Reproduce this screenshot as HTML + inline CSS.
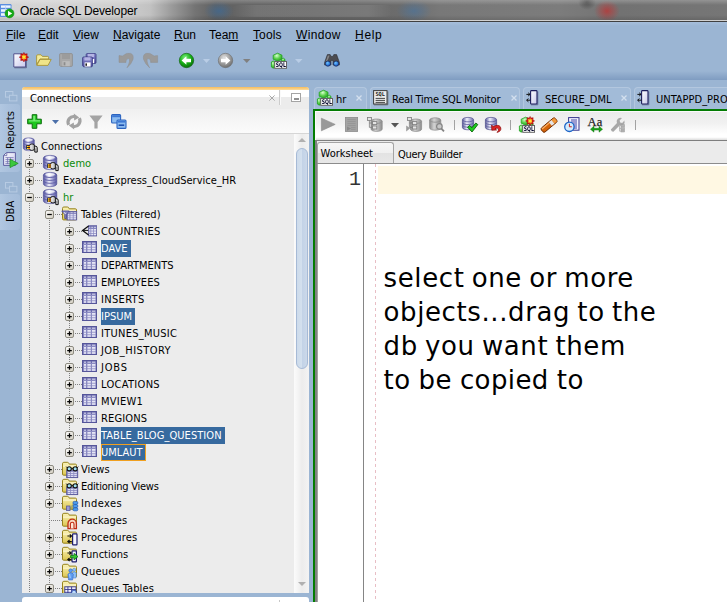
<!DOCTYPE html>
<html><head><meta charset="utf-8"><title>Oracle SQL Developer</title>
<style>
html,body{margin:0;padding:0;}
body{width:727px;height:602px;overflow:hidden;position:relative;background:#9bb5d3;font-family:"DejaVu Sans Condensed","DejaVu Sans","Liberation Sans",sans-serif;font-size:11px;color:#000;}
.a{position:absolute;}
.t{position:absolute;white-space:pre;line-height:1;}
#title{left:0;top:0;width:727px;height:20px;background:linear-gradient(90deg,#d6d6d6 0,#d0d0d0 120px,#c2c2c2 150px,#9a9a9a 172px,#747474 195px,#626262 215px,#666 300px,#6c6c6c 400px,#787878 440px,#7c7c7c 560px,#727272 620px,#767676 727px);}
#title .hl{left:0;top:0;width:727px;height:20px;background:linear-gradient(180deg,rgba(255,255,255,.22) 0,rgba(255,255,255,0) 5px,rgba(0,0,0,0) 15px,rgba(0,0,0,.12) 20px);}
.menu{font-family:"Liberation Sans",sans-serif;font-size:12px;top:29px;}
.menu u{text-decoration:underline;text-underline-offset:1px;}
.tree{font-size:11px;}
.sel{background:#376a9f;color:#fff;}
.big{font-family:"DejaVu Sans","Liberation Sans",sans-serif;font-size:26px;left:383.6px;color:#000;letter-spacing:0.6px;word-spacing:-1.6px;}

.hd{height:1px;background-image:linear-gradient(90deg,#808080 1px,transparent 1px);background-size:2px 1px;}
.vd{width:1px;background-image:linear-gradient(180deg,#808080 1px,transparent 1px);background-size:1px 2px;}
</style></head>
<body>
<div id="title" class="a"><div class="a" style="left:232px;top:5px;width:160px;height:12px;border-radius:6px;background:linear-gradient(90deg,rgba(255,255,255,0),rgba(255,255,255,.1) 15%,rgba(255,255,255,.1) 85%,rgba(255,255,255,0));"></div><div class="a" style="left:204px;top:1px;width:30px;height:20px;background:radial-gradient(ellipse at center,rgba(60,105,150,.7),rgba(60,105,150,0) 70%);"></div><div class="a" style="left:396px;top:0px;width:36px;height:22px;background:radial-gradient(ellipse at center,rgba(70,115,160,.6),rgba(70,115,160,0) 70%);"></div><div class="a" style="left:578px;top:-6px;width:18px;height:16px;background:radial-gradient(ellipse at center,rgba(40,40,40,.5),rgba(40,40,40,0) 70%);"></div><div class="a" style="left:594px;top:0px;width:26px;height:22px;background:radial-gradient(ellipse at center,rgba(190,50,50,.75),rgba(190,50,50,0) 70%);"></div><div class="a hl"></div></div>
<div class="a" style="left:0;top:20px;width:727px;height:1px;background:#d0d0d0"></div>
<div class="a" style="left:0;top:21px;width:727px;height:1px;background:#404040"></div>
<div class="t" style="left:20px;top:5px;font-family:'Liberation Sans',sans-serif;font-size:12px;letter-spacing:-0.15px;">Oracle SQL Developer</div>
<svg class="a" style="left:0;top:3px;overflow:visible" width="15" height="16" viewBox="0 0 15 16"><rect x="-0.5" y="1" width="12" height="13" rx="1.2" fill="#5a8ee0"/><g fill="#eef4ff"><rect x="1" y="2.4" width="9.6" height="2.4"/><rect x="1" y="6.2" width="9.6" height="2.6"/><rect x="1" y="10.2" width="9.6" height="2.6"/></g><path d="M5.6 2.4 L5.6 13" stroke="#b8d0f8" stroke-width="0.8"/><circle cx="9.5" cy="10.4" r="4.5" fill="#14a814" stroke="#0c8c0c" stroke-width="0.5"/><path d="M8 7.8 L12.2 10.4 L8 13 Z" fill="#fff"/></svg>
<div class="t menu" style="left:6px;letter-spacing:0px"><u>F</u>ile</div>
<div class="t menu" style="left:38px;letter-spacing:0px"><u>E</u>dit</div>
<div class="t menu" style="left:73px;letter-spacing:0px"><u>V</u>iew</div>
<div class="t menu" style="left:113px;letter-spacing:0px"><u>N</u>avigate</div>
<div class="t menu" style="left:174px;letter-spacing:0px"><u>R</u>un</div>
<div class="t menu" style="left:209px;letter-spacing:0px">Tea<u>m</u></div>
<div class="t menu" style="left:253px;letter-spacing:0.1px"><u>T</u>ools</div>
<div class="t menu" style="left:296px;letter-spacing:0.35px"><u>W</u>indow</div>
<div class="t menu" style="left:355px;letter-spacing:0.7px"><u>H</u>elp</div>
<div class="a" style="left:0;top:22px;width:727px;height:4px;background:linear-gradient(180deg,#a6bedb,#9bb5d3)"></div>
<div class="a" style="left:0;top:71px;width:727px;height:9px;background:linear-gradient(180deg,#9bb5d3,#7f9cc1)"></div>
<div class="a" style="left:0;top:104px;width:20px;height:68px;background:linear-gradient(90deg,#b1c7e1 0,#aac1dd 8px,#a5bdda 20px);border-radius:0 3px 3px 0"></div>
<div class="a" style="left:0;top:194px;width:20px;height:36px;background:linear-gradient(90deg,#b1c7e1 0,#aac1dd 8px,#a5bdda 20px);border-radius:0 3px 3px 0"></div>
<div class="t" style="left:5px;top:149px;transform-origin:0 0;transform:rotate(-90deg);font-size:11px;">Reports</div>
<div class="t" style="left:5px;top:222px;transform-origin:0 0;transform:rotate(-90deg);font-size:11px;">DBA</div>
<svg class="a" style="left:3px;top:152px;overflow:visible" width="16" height="16" viewBox="0 0 16 16"><path d="M0.6 3.4 L3.6 0.6 L12.4 0.6 L12.4 13.4 L0.6 13.4 Z" fill="url(#gdoc)" stroke="#55559a" stroke-width="0.9"/><path d="M0.8 3.6 L3.8 3.6 L3.8 0.8" fill="none" stroke="#55559a" stroke-width="0.7"/><g stroke="#6c6cae" stroke-width="0.7" fill="none"><path d="M2.4 5.6 L10.6 5.6 M2.4 7.6 L10.6 7.6 M2.4 9.6 L8 9.6 M2.4 11.6 L7 11.6 M4.6 5.6 L4.6 12 M7.4 5.6 L7.4 9"/></g><path d="M7 7.2 L15.2 11.4 L7 15.6 Z" fill="#3cc83c" stroke="#1c8c1c" stroke-width="0.7" stroke-linejoin="round"/></svg>
<div class="a" style="left:22px;top:87px;width:287px;height:506px;background:#ececec;border-radius:3px 3px 0 0;overflow:hidden"><div class="a" style="left:0;top:0;width:287px;height:3px;background:linear-gradient(180deg,#f7bd5c,#fbdca0)"></div><div class="a" style="left:0;top:3px;width:287px;height:7px;background:#fff"></div><div class="a" style="left:0;top:10px;width:287px;height:12px;background:#ececec"></div><div class="a" style="left:0;top:22px;width:287px;height:24px;background:linear-gradient(180deg,#f0f0f0,#fbfbfb)"></div><div class="a" style="left:0;top:46px;width:287px;height:1px;background:#d6d6d6"></div><div class="a" style="left:272px;top:47px;width:15px;height:459px;background:linear-gradient(90deg,#fbfbfb 0,#f6f6f6 3px,#ececec 8px,#f3f3f3 15px)"></div></div>
<div class="t" style="left:30px;top:93px;font-size:11px;">Connections</div>
<svg class="a" style="left:269px;top:95px" width="6" height="6" viewBox="0 0 6 6"><path d="M0.4 0.4 L5.6 5.6 M5.6 0.4 L0.4 5.6" stroke="#a8a8a8" stroke-width="1"/></svg>
<div class="a" style="left:279px;top:90px;width:1px;height:15px;background:#cccccc"></div><div class="a" style="left:280px;top:90px;width:1px;height:15px;background:#fafafa"></div>
<div class="a" style="left:291px;top:93px;width:8px;height:7px;border:1px solid #a4a4a4;background:#fff"></div><div class="a" style="left:293.5px;top:98px;width:5px;height:1.6px;background:#909090"></div>
<svg class="a" style="left:5px;top:91px" width="13" height="11" viewBox="0 0 13 11"><rect x="0.5" y="0.5" width="7.4" height="5.6" fill="none" stroke="#b7cbe3" stroke-width="1"/><rect x="4.5" y="4.3" width="7.4" height="5.6" fill="#9bb5d3" stroke="#b7cbe3" stroke-width="1"/></svg>
<svg class="a" style="left:5px;top:182px" width="13" height="11" viewBox="0 0 13 11"><rect x="0.5" y="0.5" width="7.4" height="5.6" fill="none" stroke="#b7cbe3" stroke-width="1"/><rect x="4.5" y="4.3" width="7.4" height="5.6" fill="#9bb5d3" stroke="#b7cbe3" stroke-width="1"/></svg>
<div class="a" style="left:22px;top:597px;width:287px;height:10px;background:#fff;border-radius:3px 3px 0 0"></div>
<svg class="a" style="left:298px;top:138px" width="8" height="4" viewBox="0 0 10 5"><path d="M0 5 L5 0 L10 5 Z" fill="#b0b0b0"/></svg>
<svg class="a" style="left:298px;top:582px" width="8" height="4" viewBox="0 0 10 5"><path d="M0 0 L5 5 L10 0 Z" fill="#b0b0b0"/></svg>
<div class="a" style="left:279px;top:600px;width:1px;height:2px;background:#c8c8c8"></div>
<div class="a" style="left:296px;top:148px;width:10px;height:219px;border:1px solid #a6bad6;border-radius:6px;background:linear-gradient(90deg,#cddbeb,#d3e0ee 45%,#c3d3e7 55%,#cbd9ea)"></div>
<svg width="0" height="0" style="position:absolute"><defs>
<linearGradient id="gcyl" x1="0" x2="1" y1="0" y2="0"><stop offset="0" stop-color="#4f4f9a"/><stop offset="0.18" stop-color="#8f8fc8"/><stop offset="0.42" stop-color="#f0f0fa"/><stop offset="0.7" stop-color="#9c9cd0"/><stop offset="1" stop-color="#55559e"/></linearGradient>
<linearGradient id="gfold" x1="0" x2="0" y1="0" y2="1"><stop offset="0" stop-color="#faf3b8"/><stop offset="1" stop-color="#dcc650"/></linearGradient>
<linearGradient id="gplug" x1="0" x2="1" y1="0" y2="0"><stop offset="0" stop-color="#ffffff"/><stop offset="1" stop-color="#a8a8a8"/></linearGradient>
<linearGradient id="gexp" x1="0" x2="1" y1="0" y2="1"><stop offset="0" stop-color="#ffffff"/><stop offset="1" stop-color="#cfcabc"/></linearGradient>
<g id="cyl"><path d="M0.4 3.2 C0.4 -0.6 13.8 -0.6 13.8 3.2 L13.8 11.8 C13.8 15.6 0.4 15.6 0.4 11.8 Z" fill="url(#gcyl)" stroke="#4a4a94" stroke-width="0.6"/>
<path d="M0.6 3.4 C1.5 6.2 12.7 6.2 13.6 3.4" fill="none" stroke="#5a5aa4" stroke-width="0.9"/>
<path d="M0.6 6.3 C1.5 9.1 12.7 9.1 13.6 6.3" fill="none" stroke="#5a5aa4" stroke-width="0.9"/>
<path d="M0.6 9.2 C1.5 12 12.7 12 13.6 9.2" fill="none" stroke="#5a5aa4" stroke-width="0.9"/>
<ellipse cx="7.1" cy="2.6" rx="4.8" ry="1.3" fill="#fff" opacity="0.75"/></g>
<g id="plug"><path d="M11.5 9.2 L14 9.8 Q15.2 10 15.2 11.2 L15.2 15.6 L12.8 15.6 L12.8 12 L11.5 12 Z" fill="#d8d8d8" stroke="#111" stroke-width="1"/>
<rect x="4.3" y="8.6" width="4" height="4.4" fill="#111"/>
<rect x="7.6" y="7.6" width="4.8" height="6.2" rx="1.6" fill="url(#gplug)" stroke="#111" stroke-width="0.9"/>
<rect x="5" y="9.4" width="3" height="1.1" fill="#ff8c00"/><rect x="5" y="9.4" width="1.2" height="1.1" fill="#ffe840"/>
<rect x="5" y="11.4" width="3" height="1.1" fill="#ff8c00"/><rect x="5" y="11.4" width="1.2" height="1.1" fill="#ffe840"/></g>
<g id="tbl"><rect x="0.5" y="1.5" width="14" height="11" fill="#8a8ac2" stroke="#55559a" stroke-width="1"/>
<rect x="1" y="2" width="13" height="2" fill="#6c6cae"/>
<g fill="#e6e6f6"><rect x="2" y="2.6" width="2" height="1.2" opacity=".8"/><rect x="5.4" y="2.6" width="3.4" height="1.2" opacity=".8"/><rect x="10" y="2.6" width="3.4" height="1.2" opacity=".8"/>
<rect x="2" y="5" width="2" height="1.8"/><rect x="5.4" y="5" width="3.4" height="1.8"/><rect x="10" y="5" width="3.4" height="1.8"/>
<rect x="2" y="7.6" width="2" height="1.8"/><rect x="5.4" y="7.6" width="3.4" height="1.8"/><rect x="10" y="7.6" width="3.4" height="1.8"/>
<rect x="2" y="10.2" width="2" height="1.6"/><rect x="5.4" y="10.2" width="3.4" height="1.6"/><rect x="10" y="10.2" width="3.4" height="1.6"/></g></g>
<g id="fold"><path d="M0.5 2.2 Q0.5 0.6 1.8 0.6 L5.4 0.6 Q6.4 0.6 6.8 1.6 L7.2 2.4 L13.4 2.4 Q14.5 2.4 14.5 3.6 L14.5 12.4 Q14.5 13.5 13.4 13.5 L1.6 13.5 Q0.5 13.5 0.5 12.4 Z" fill="url(#gfold)" stroke="#96821c" stroke-width="1"/>
<path d="M1 4.4 L14 4.4" stroke="#fffbe0" stroke-width="0.9"/></g>
</defs></svg>
<div class="a tree" style="left:0;top:0;width:294px;height:593px;overflow:hidden"><div class="a vd" style="left:29px;top:155px;height:438px"></div><div class="a vd" style="left:49px;top:206px;height:387px"></div><div class="a vd" style="left:69px;top:223px;height:229px"></div><div class="a" style="left:23px;top:138px;width:16px;height:16px"><svg width="16" height="16" viewBox="0 0 16 16" style="position:absolute;left:0;top:0;overflow:visible"><g transform="translate(0,-0.5) scale(0.82,0.9)"><use href="#cyl"/></g><g transform="translate(-1,-1.5)"><use href="#plug"/></g></svg></div><div class="t" style="left:41px;top:138px;line-height:17px;color:#000;letter-spacing:0px">Connections</div><div class="a hd" style="left:35px;top:163px;width:8px"></div><svg class="a" style="left:25px;top:159px" width="9" height="9" viewBox="0 0 9 9"><rect x="0.5" y="0.5" width="8" height="8" rx="1.5" fill="url(#gexp)" stroke="#8c8a80"/><path d="M2.2 4.5 L6.8 4.5 M4.5 2.2 L4.5 6.8" stroke="#000" stroke-width="1.25"/></svg><div class="a" style="left:43px;top:155px;width:16px;height:16px"><svg width="16" height="16" viewBox="0 0 16 16" style="position:absolute;left:0;top:0;overflow:visible"><use href="#cyl"/><use href="#plug"/></svg></div><div class="t" style="left:63px;top:155px;line-height:17px;color:#0a8a0a;letter-spacing:0px">demo</div><div class="a hd" style="left:35px;top:180px;width:8px"></div><svg class="a" style="left:25px;top:176px" width="9" height="9" viewBox="0 0 9 9"><rect x="0.5" y="0.5" width="8" height="8" rx="1.5" fill="url(#gexp)" stroke="#8c8a80"/><path d="M2.2 4.5 L6.8 4.5 M4.5 2.2 L4.5 6.8" stroke="#000" stroke-width="1.25"/></svg><div class="a" style="left:43px;top:172px;width:16px;height:16px"><svg width="16" height="16" viewBox="0 0 16 16" style="position:absolute;left:0;top:0;overflow:visible"><use href="#cyl"/></svg></div><div class="t" style="left:63px;top:172px;line-height:17px;color:#000;letter-spacing:0px">Exadata_Express_CloudService_HR</div><div class="a hd" style="left:35px;top:197px;width:8px"></div><svg class="a" style="left:25px;top:193px" width="9" height="9" viewBox="0 0 9 9"><rect x="0.5" y="0.5" width="8" height="8" rx="1.5" fill="url(#gexp)" stroke="#8c8a80"/><path d="M2.2 4.5 L6.8 4.5" stroke="#000" stroke-width="1.25"/></svg><div class="a" style="left:43px;top:189px;width:16px;height:16px"><svg width="16" height="16" viewBox="0 0 16 16" style="position:absolute;left:0;top:0;overflow:visible"><use href="#cyl"/><use href="#plug"/></svg></div><div class="t" style="left:63px;top:189px;line-height:17px;color:#0a8a0a;letter-spacing:0px">hr</div><div class="a hd" style="left:55px;top:214px;width:7px"></div><svg class="a" style="left:45px;top:210px" width="9" height="9" viewBox="0 0 9 9"><rect x="0.5" y="0.5" width="8" height="8" rx="1.5" fill="url(#gexp)" stroke="#8c8a80"/><path d="M2.2 4.5 L6.8 4.5" stroke="#000" stroke-width="1.25"/></svg><div class="a" style="left:62px;top:206px;width:16px;height:16px"><svg width="16" height="16" viewBox="0 0 16 16" style="position:absolute;left:0;top:0;overflow:visible"><use href="#fold" y="0.4"/><g transform="translate(4.6,4.2) scale(0.7,0.78)"><use href="#tbl"/></g><path d="M-0.2 5 L7.2 5 L4.4 8.6 L4.4 12.6 L2.8 12.6 L2.8 8.6 Z" fill="#8c8cc8" stroke="#4c4c94" stroke-width="0.9"/><path d="M2 6.2 L3.6 8" stroke="#fff" stroke-width="0.9"/></svg></div><div class="t" style="left:81px;top:206px;line-height:17px;color:#000;letter-spacing:0.1px">Tables (Filtered)</div><div class="a hd" style="left:75px;top:231px;width:7px"></div><svg class="a" style="left:65px;top:227px" width="9" height="9" viewBox="0 0 9 9"><rect x="0.5" y="0.5" width="8" height="8" rx="1.5" fill="url(#gexp)" stroke="#8c8a80"/><path d="M2.2 4.5 L6.8 4.5 M4.5 2.2 L4.5 6.8" stroke="#000" stroke-width="1.25"/></svg><div class="a" style="left:82px;top:223px;width:16px;height:16px"><svg width="16" height="16" viewBox="0 0 16 16" style="position:absolute;left:0;top:0;overflow:visible"><g transform="translate(6,1.4) scale(0.6,0.92)"><use href="#tbl"/></g><path d="M6.6 3 L0.6 7.4 L6.6 12" fill="none" stroke="#111" stroke-width="1.3"/><path d="M0.8 7.4 L6.2 7.4" stroke="#111" stroke-width="1"/></svg></div><div class="t" style="left:101px;top:223px;line-height:17px;color:#000;letter-spacing:0.19px">COUNTRIES</div><div class="a hd" style="left:75px;top:248px;width:7px"></div><svg class="a" style="left:65px;top:244px" width="9" height="9" viewBox="0 0 9 9"><rect x="0.5" y="0.5" width="8" height="8" rx="1.5" fill="url(#gexp)" stroke="#8c8a80"/><path d="M2.2 4.5 L6.8 4.5 M4.5 2.2 L4.5 6.8" stroke="#000" stroke-width="1.25"/></svg><div class="a" style="left:82px;top:240px;width:16px;height:16px"><svg width="16" height="16" viewBox="0 0 16 16" style="position:absolute;left:0;top:0;overflow:visible"><use href="#tbl"/></svg></div><div class="t sel" style="left:101px;top:240px;height:17px;line-height:17px;padding:0 3px 0 0;letter-spacing:0px;">DAVE</div><div class="a hd" style="left:75px;top:265px;width:7px"></div><svg class="a" style="left:65px;top:261px" width="9" height="9" viewBox="0 0 9 9"><rect x="0.5" y="0.5" width="8" height="8" rx="1.5" fill="url(#gexp)" stroke="#8c8a80"/><path d="M2.2 4.5 L6.8 4.5 M4.5 2.2 L4.5 6.8" stroke="#000" stroke-width="1.25"/></svg><div class="a" style="left:82px;top:257px;width:16px;height:16px"><svg width="16" height="16" viewBox="0 0 16 16" style="position:absolute;left:0;top:0;overflow:visible"><use href="#tbl"/></svg></div><div class="t" style="left:101px;top:257px;line-height:17px;color:#000;letter-spacing:0px">DEPARTMENTS</div><div class="a hd" style="left:75px;top:282px;width:7px"></div><svg class="a" style="left:65px;top:278px" width="9" height="9" viewBox="0 0 9 9"><rect x="0.5" y="0.5" width="8" height="8" rx="1.5" fill="url(#gexp)" stroke="#8c8a80"/><path d="M2.2 4.5 L6.8 4.5 M4.5 2.2 L4.5 6.8" stroke="#000" stroke-width="1.25"/></svg><div class="a" style="left:82px;top:274px;width:16px;height:16px"><svg width="16" height="16" viewBox="0 0 16 16" style="position:absolute;left:0;top:0;overflow:visible"><use href="#tbl"/></svg></div><div class="t" style="left:101px;top:274px;line-height:17px;color:#000;letter-spacing:0.12px">EMPLOYEES</div><div class="a hd" style="left:75px;top:299px;width:7px"></div><svg class="a" style="left:65px;top:295px" width="9" height="9" viewBox="0 0 9 9"><rect x="0.5" y="0.5" width="8" height="8" rx="1.5" fill="url(#gexp)" stroke="#8c8a80"/><path d="M2.2 4.5 L6.8 4.5 M4.5 2.2 L4.5 6.8" stroke="#000" stroke-width="1.25"/></svg><div class="a" style="left:82px;top:291px;width:16px;height:16px"><svg width="16" height="16" viewBox="0 0 16 16" style="position:absolute;left:0;top:0;overflow:visible"><use href="#tbl"/></svg></div><div class="t" style="left:101px;top:291px;line-height:17px;color:#000;letter-spacing:0.33px">INSERTS</div><div class="a hd" style="left:75px;top:316px;width:7px"></div><svg class="a" style="left:65px;top:312px" width="9" height="9" viewBox="0 0 9 9"><rect x="0.5" y="0.5" width="8" height="8" rx="1.5" fill="url(#gexp)" stroke="#8c8a80"/><path d="M2.2 4.5 L6.8 4.5 M4.5 2.2 L4.5 6.8" stroke="#000" stroke-width="1.25"/></svg><div class="a" style="left:82px;top:308px;width:16px;height:16px"><svg width="16" height="16" viewBox="0 0 16 16" style="position:absolute;left:0;top:0;overflow:visible"><use href="#tbl"/></svg></div><div class="t sel" style="left:101px;top:308px;height:17px;line-height:17px;padding:0 3px 0 0;letter-spacing:0px;">IPSUM</div><div class="a hd" style="left:75px;top:333px;width:7px"></div><svg class="a" style="left:65px;top:329px" width="9" height="9" viewBox="0 0 9 9"><rect x="0.5" y="0.5" width="8" height="8" rx="1.5" fill="url(#gexp)" stroke="#8c8a80"/><path d="M2.2 4.5 L6.8 4.5 M4.5 2.2 L4.5 6.8" stroke="#000" stroke-width="1.25"/></svg><div class="a" style="left:82px;top:325px;width:16px;height:16px"><svg width="16" height="16" viewBox="0 0 16 16" style="position:absolute;left:0;top:0;overflow:visible"><use href="#tbl"/></svg></div><div class="t" style="left:101px;top:325px;line-height:17px;color:#000;letter-spacing:0.27px">ITUNES_MUSIC</div><div class="a hd" style="left:75px;top:350px;width:7px"></div><svg class="a" style="left:65px;top:346px" width="9" height="9" viewBox="0 0 9 9"><rect x="0.5" y="0.5" width="8" height="8" rx="1.5" fill="url(#gexp)" stroke="#8c8a80"/><path d="M2.2 4.5 L6.8 4.5 M4.5 2.2 L4.5 6.8" stroke="#000" stroke-width="1.25"/></svg><div class="a" style="left:82px;top:342px;width:16px;height:16px"><svg width="16" height="16" viewBox="0 0 16 16" style="position:absolute;left:0;top:0;overflow:visible"><use href="#tbl"/></svg></div><div class="t" style="left:101px;top:342px;line-height:17px;color:#000;letter-spacing:0.45px">JOB_HISTORY</div><div class="a hd" style="left:75px;top:367px;width:7px"></div><svg class="a" style="left:65px;top:363px" width="9" height="9" viewBox="0 0 9 9"><rect x="0.5" y="0.5" width="8" height="8" rx="1.5" fill="url(#gexp)" stroke="#8c8a80"/><path d="M2.2 4.5 L6.8 4.5 M4.5 2.2 L4.5 6.8" stroke="#000" stroke-width="1.25"/></svg><div class="a" style="left:82px;top:359px;width:16px;height:16px"><svg width="16" height="16" viewBox="0 0 16 16" style="position:absolute;left:0;top:0;overflow:visible"><use href="#tbl"/></svg></div><div class="t" style="left:101px;top:359px;line-height:17px;color:#000;letter-spacing:0.8px">JOBS</div><div class="a hd" style="left:75px;top:384px;width:7px"></div><svg class="a" style="left:65px;top:380px" width="9" height="9" viewBox="0 0 9 9"><rect x="0.5" y="0.5" width="8" height="8" rx="1.5" fill="url(#gexp)" stroke="#8c8a80"/><path d="M2.2 4.5 L6.8 4.5 M4.5 2.2 L4.5 6.8" stroke="#000" stroke-width="1.25"/></svg><div class="a" style="left:82px;top:376px;width:16px;height:16px"><svg width="16" height="16" viewBox="0 0 16 16" style="position:absolute;left:0;top:0;overflow:visible"><use href="#tbl"/></svg></div><div class="t" style="left:101px;top:376px;line-height:17px;color:#000;letter-spacing:0.31px">LOCATIONS</div><div class="a hd" style="left:75px;top:401px;width:7px"></div><svg class="a" style="left:65px;top:397px" width="9" height="9" viewBox="0 0 9 9"><rect x="0.5" y="0.5" width="8" height="8" rx="1.5" fill="url(#gexp)" stroke="#8c8a80"/><path d="M2.2 4.5 L6.8 4.5 M4.5 2.2 L4.5 6.8" stroke="#000" stroke-width="1.25"/></svg><div class="a" style="left:82px;top:393px;width:16px;height:16px"><svg width="16" height="16" viewBox="0 0 16 16" style="position:absolute;left:0;top:0;overflow:visible"><use href="#tbl"/></svg></div><div class="t" style="left:101px;top:393px;line-height:17px;color:#000;letter-spacing:0.25px">MVIEW1</div><div class="a hd" style="left:75px;top:418px;width:7px"></div><svg class="a" style="left:65px;top:414px" width="9" height="9" viewBox="0 0 9 9"><rect x="0.5" y="0.5" width="8" height="8" rx="1.5" fill="url(#gexp)" stroke="#8c8a80"/><path d="M2.2 4.5 L6.8 4.5 M4.5 2.2 L4.5 6.8" stroke="#000" stroke-width="1.25"/></svg><div class="a" style="left:82px;top:410px;width:16px;height:16px"><svg width="16" height="16" viewBox="0 0 16 16" style="position:absolute;left:0;top:0;overflow:visible"><use href="#tbl"/></svg></div><div class="t" style="left:101px;top:410px;line-height:17px;color:#000;letter-spacing:0.15px">REGIONS</div><div class="a hd" style="left:75px;top:435px;width:7px"></div><svg class="a" style="left:65px;top:431px" width="9" height="9" viewBox="0 0 9 9"><rect x="0.5" y="0.5" width="8" height="8" rx="1.5" fill="url(#gexp)" stroke="#8c8a80"/><path d="M2.2 4.5 L6.8 4.5 M4.5 2.2 L4.5 6.8" stroke="#000" stroke-width="1.25"/></svg><div class="a" style="left:82px;top:427px;width:16px;height:16px"><svg width="16" height="16" viewBox="0 0 16 16" style="position:absolute;left:0;top:0;overflow:visible"><use href="#tbl"/></svg></div><div class="t sel" style="left:101px;top:427px;height:17px;line-height:17px;padding:0 3px 0 0;letter-spacing:0.06px;">TABLE_BLOG_QUESTION</div><div class="a hd" style="left:75px;top:452px;width:7px"></div><svg class="a" style="left:65px;top:448px" width="9" height="9" viewBox="0 0 9 9"><rect x="0.5" y="0.5" width="8" height="8" rx="1.5" fill="url(#gexp)" stroke="#8c8a80"/><path d="M2.2 4.5 L6.8 4.5 M4.5 2.2 L4.5 6.8" stroke="#000" stroke-width="1.25"/></svg><div class="a" style="left:82px;top:444px;width:16px;height:16px"><svg width="16" height="16" viewBox="0 0 16 16" style="position:absolute;left:0;top:0;overflow:visible"><use href="#tbl"/></svg></div><div class="t sel" style="left:101px;top:444px;height:17px;line-height:17px;padding:0 3px 0 0;letter-spacing:0px;outline:1px solid #f0a020;outline-offset:-1px;">UMLAUT</div><div class="a hd" style="left:55px;top:469px;width:7px"></div><svg class="a" style="left:45px;top:465px" width="9" height="9" viewBox="0 0 9 9"><rect x="0.5" y="0.5" width="8" height="8" rx="1.5" fill="url(#gexp)" stroke="#8c8a80"/><path d="M2.2 4.5 L6.8 4.5 M4.5 2.2 L4.5 6.8" stroke="#000" stroke-width="1.25"/></svg><div class="a" style="left:62px;top:461px;width:16px;height:16px"><svg width="16" height="16" viewBox="0 0 16 16" style="position:absolute;left:0;top:0;overflow:visible"><use href="#fold" y="0.7"/><g transform="translate(4.2,4.4)"><rect x="0.5" y="4.6" width="11" height="7.6" fill="#8a8ac2" stroke="#55559a" stroke-width="0.9"/><g fill="#dcdcf2"><rect x="1.6" y="6.4" width="2.4" height="1.2"/><rect x="4.8" y="6.4" width="2.4" height="1.2"/><rect x="8" y="6.4" width="2.6" height="1.2"/><rect x="1.6" y="8.4" width="2.4" height="1.2"/><rect x="4.8" y="8.4" width="2.4" height="1.2"/><rect x="8" y="8.4" width="2.6" height="1.2"/><rect x="1.6" y="10.4" width="2.4" height="1.2"/><rect x="4.8" y="10.4" width="2.4" height="1.2"/><rect x="8" y="10.4" width="2.6" height="1.2"/></g><path d="M0 1.2 L1.4 2.6 M12 1.2 L10.6 2.6 M5 3 L7 3" stroke="#111" stroke-width="1" fill="none"/><circle cx="3" cy="3.4" r="2.1" fill="#9fe0f0" stroke="#111" stroke-width="1.1"/><circle cx="9" cy="3.4" r="2.1" fill="#9fe0f0" stroke="#111" stroke-width="1.1"/></g></svg></div><div class="t" style="left:81px;top:461px;line-height:17px;color:#000;letter-spacing:0px">Views</div><div class="a hd" style="left:55px;top:486px;width:7px"></div><svg class="a" style="left:45px;top:482px" width="9" height="9" viewBox="0 0 9 9"><rect x="0.5" y="0.5" width="8" height="8" rx="1.5" fill="url(#gexp)" stroke="#8c8a80"/><path d="M2.2 4.5 L6.8 4.5 M4.5 2.2 L4.5 6.8" stroke="#000" stroke-width="1.25"/></svg><div class="a" style="left:62px;top:478px;width:16px;height:16px"><svg width="16" height="16" viewBox="0 0 16 16" style="position:absolute;left:0;top:0;overflow:visible"><use href="#fold" y="0.7"/><g transform="translate(4.2,4.4)"><rect x="0.5" y="4.6" width="11" height="7.6" fill="#8a8ac2" stroke="#55559a" stroke-width="0.9"/><g fill="#dcdcf2"><rect x="1.6" y="6.4" width="2.4" height="1.2"/><rect x="4.8" y="6.4" width="2.4" height="1.2"/><rect x="8" y="6.4" width="2.6" height="1.2"/><rect x="1.6" y="8.4" width="2.4" height="1.2"/><rect x="4.8" y="8.4" width="2.4" height="1.2"/><rect x="8" y="8.4" width="2.6" height="1.2"/><rect x="1.6" y="10.4" width="2.4" height="1.2"/><rect x="4.8" y="10.4" width="2.4" height="1.2"/><rect x="8" y="10.4" width="2.6" height="1.2"/></g><path d="M0 1.2 L1.4 2.6 M12 1.2 L10.6 2.6 M5 3 L7 3" stroke="#111" stroke-width="1" fill="none"/><circle cx="3" cy="3.4" r="2.1" fill="#9fe0f0" stroke="#111" stroke-width="1.1"/><circle cx="9" cy="3.4" r="2.1" fill="#9fe0f0" stroke="#111" stroke-width="1.1"/></g></svg></div><div class="t" style="left:81px;top:478px;line-height:17px;color:#000;letter-spacing:-0.23px">Editioning Views</div><div class="a hd" style="left:55px;top:503px;width:7px"></div><svg class="a" style="left:45px;top:499px" width="9" height="9" viewBox="0 0 9 9"><rect x="0.5" y="0.5" width="8" height="8" rx="1.5" fill="url(#gexp)" stroke="#8c8a80"/><path d="M2.2 4.5 L6.8 4.5 M4.5 2.2 L4.5 6.8" stroke="#000" stroke-width="1.25"/></svg><div class="a" style="left:62px;top:495px;width:16px;height:16px"><svg width="16" height="16" viewBox="0 0 16 16" style="position:absolute;left:0;top:0;overflow:visible"><use href="#fold" y="0.7"/><g transform="translate(4,6)"><rect x="0.6" y="5" width="3.4" height="4.6" fill="#9c9cd4" stroke="#55559a" stroke-width="0.8"/><path d="M4.2 7.2 L7 3.2 M4.2 7.2 L7 6.2 M4.2 7.2 L7 9" stroke="#7c8c5c" stroke-width="0.6"/><rect x="7" y="0.4" width="4.8" height="3" rx="1.3" fill="#4c9cec" stroke="#1c54b4" stroke-width="0.7"/><rect x="7" y="3.6" width="4.8" height="3" rx="1.3" fill="#4c9cec" stroke="#1c54b4" stroke-width="0.7"/><rect x="7" y="6.8" width="4.8" height="3" rx="1.3" fill="#4c9cec" stroke="#1c54b4" stroke-width="0.7"/></g></svg></div><div class="t" style="left:81px;top:495px;line-height:17px;color:#000;letter-spacing:0.4px">Indexes</div><div class="a hd" style="left:49px;top:520px;width:13px"></div><div class="a" style="left:62px;top:512px;width:16px;height:16px"><svg width="16" height="16" viewBox="0 0 16 16" style="position:absolute;left:0;top:0;overflow:visible"><use href="#fold" y="0.7"/><g transform="translate(5,7)"><path d="M1 9.6 L1 4.4 A4.2 4.2 0 0 1 9.4 4.4 L9.4 9.6 Z" fill="#f8d8c0" stroke="#c02c14" stroke-width="1.3"/><path d="M3.4 9.6 L3.4 5 A1.8 1.8 0 0 1 7 5 L7 9.6" fill="#fce8d8" stroke="#c02c14" stroke-width="1.1"/></g></svg></div><div class="t" style="left:81px;top:512px;line-height:17px;color:#000;letter-spacing:0px">Packages</div><div class="a hd" style="left:55px;top:537px;width:7px"></div><svg class="a" style="left:45px;top:533px" width="9" height="9" viewBox="0 0 9 9"><rect x="0.5" y="0.5" width="8" height="8" rx="1.5" fill="url(#gexp)" stroke="#8c8a80"/><path d="M2.2 4.5 L6.8 4.5 M4.5 2.2 L4.5 6.8" stroke="#000" stroke-width="1.25"/></svg><div class="a" style="left:62px;top:529px;width:16px;height:16px"><svg width="16" height="16" viewBox="0 0 16 16" style="position:absolute;left:0;top:0;overflow:visible"><use href="#fold" y="0.7"/><g transform="translate(4,3.6)"><rect x="6.6" y="1.2" width="4.4" height="11" rx="0.6" fill="#f4f4ff" stroke="#1c1c6c" stroke-width="1.2"/><path d="M1.4 3.4 L5.6 3.4 M3.8 1.8 L5.6 3.4 L3.8 5 M5.8 9 L1.8 9 M3.6 7.4 L1.8 9 L3.6 10.6" fill="none" stroke="#111" stroke-width="1.1"/></g></svg></div><div class="t" style="left:81px;top:529px;line-height:17px;color:#000;letter-spacing:0.14px">Procedures</div><div class="a hd" style="left:55px;top:554px;width:7px"></div><svg class="a" style="left:45px;top:550px" width="9" height="9" viewBox="0 0 9 9"><rect x="0.5" y="0.5" width="8" height="8" rx="1.5" fill="url(#gexp)" stroke="#8c8a80"/><path d="M2.2 4.5 L6.8 4.5 M4.5 2.2 L4.5 6.8" stroke="#000" stroke-width="1.25"/></svg><div class="a" style="left:62px;top:546px;width:16px;height:16px"><svg width="16" height="16" viewBox="0 0 16 16" style="position:absolute;left:0;top:0;overflow:visible"><use href="#fold" y="0.7"/><g transform="translate(4,3.6)"><rect x="6" y="1.2" width="4.4" height="11" rx="0.6" fill="#f4f4ff" stroke="#1c1c6c" stroke-width="1.2"/><path d="M1.4 3.4 L5.2 3.4 M3.4 1.8 L5.2 3.4 L3.4 5 M5.4 10 L1.8 10 M3.6 8.4 L1.8 10 L3.6 11.6" fill="none" stroke="#111" stroke-width="1.1"/><path d="M4.6 5.8 L8 5.8 L8 3.8 L12 7 L8 10.2 L8 8.2 L4.6 8.2 Z" fill="#34c834" stroke="#0c740c" stroke-width="0.8" stroke-linejoin="round"/></g></svg></div><div class="t" style="left:81px;top:546px;line-height:17px;color:#000;letter-spacing:0px">Functions</div><div class="a hd" style="left:55px;top:571px;width:7px"></div><svg class="a" style="left:45px;top:567px" width="9" height="9" viewBox="0 0 9 9"><rect x="0.5" y="0.5" width="8" height="8" rx="1.5" fill="url(#gexp)" stroke="#8c8a80"/><path d="M2.2 4.5 L6.8 4.5 M4.5 2.2 L4.5 6.8" stroke="#000" stroke-width="1.25"/></svg><div class="a" style="left:62px;top:563px;width:16px;height:16px"><svg width="16" height="16" viewBox="0 0 16 16" style="position:absolute;left:0;top:0;overflow:visible"><use href="#fold" y="0.7"/><g transform="translate(5.6,5)"><circle cx="6.6" cy="1.8" r="1.6" fill="#8cc0f8" stroke="#3c74cc" stroke-width="0.5"/><path d="M4.4 5 Q6.6 2.6 8.8 5 L8.4 10 L4.8 10 Z" fill="#8cc0f8" stroke="#3c74cc" stroke-width="0.5"/><circle cx="3" cy="2.6" r="1.8" fill="#5c9cf0" stroke="#2c5cb8" stroke-width="0.5"/><path d="M0.2 6.4 Q3 2.8 5.8 6.4 L5 12 L1 12 Z" fill="#5c9cf0" stroke="#2c5cb8" stroke-width="0.5"/><path d="M2 6 L2.6 10" stroke="#c8e0ff" stroke-width="0.8"/></g></svg></div><div class="t" style="left:81px;top:563px;line-height:17px;color:#000;letter-spacing:0.2px">Queues</div><div class="a hd" style="left:55px;top:588px;width:7px"></div><svg class="a" style="left:45px;top:584px" width="9" height="9" viewBox="0 0 9 9"><rect x="0.5" y="0.5" width="8" height="8" rx="1.5" fill="url(#gexp)" stroke="#8c8a80"/><path d="M2.2 4.5 L6.8 4.5 M4.5 2.2 L4.5 6.8" stroke="#000" stroke-width="1.25"/></svg><div class="a" style="left:62px;top:580px;width:16px;height:16px"><svg width="16" height="16" viewBox="0 0 16 16" style="position:absolute;left:0;top:0;overflow:visible"><use href="#fold" y="0.7"/><g transform="translate(2.4,6.4) scale(0.8,0.85)"><rect x="0.5" y="0.5" width="14" height="11" fill="#f4f4ff" stroke="#34348c" stroke-width="1.1"/><path d="M0.5 3.6 L14.5 3.6 M0.5 7 L14.5 7 M4.4 0.5 L4.4 11.5 M9 0.5 L9 11.5" stroke="#34348c" stroke-width="1.1"/></g><circle cx="12" cy="12.4" r="2.3" fill="#bcdcfc" stroke="#2c4cac" stroke-width="1"/></svg></div><div class="t" style="left:81px;top:580px;line-height:17px;color:#000;letter-spacing:0.12px">Queues Tables</div></div>
<div class="a" style="left:314px;top:87px;width:53px;height:22px;box-sizing:border-box;border:1px solid #b3c7df;border-bottom:none;border-radius:4px 4px 0 0;background:#a2bbd8"></div><div class="t" style="left:336px;top:94px;font-size:11px;letter-spacing:0px">hr</div>
<div class="a" style="left:369.5px;top:87px;width:150.5px;height:22px;box-sizing:border-box;border:1px solid #b3c7df;border-bottom:none;border-radius:4px 4px 0 0;background:#a2bbd8"></div><div class="t" style="left:392px;top:94px;font-size:11px;letter-spacing:-0.18px">Real Time SQL Monitor</div>
<div class="a" style="left:522.5px;top:87px;width:108.5px;height:22px;box-sizing:border-box;border:1px solid #b3c7df;border-bottom:none;border-radius:4px 4px 0 0;background:#a2bbd8"></div><div class="t" style="left:545px;top:94px;font-size:11px;letter-spacing:0px">SECURE_DML</div>
<div class="a" style="left:634px;top:87px;width:100px;height:22px;box-sizing:border-box;border:1px solid #b3c7df;border-bottom:none;border-radius:4px 4px 0 0;background:#a2bbd8"></div><div class="t" style="left:656px;top:94px;font-size:11px;letter-spacing:0px">UNTAPPD_PROC</div>
<svg class="a" style="left:356px;top:95px" width="6" height="6" viewBox="0 0 6 6"><path d="M0.5 0.5 L5.5 5.5 M5.5 0.5 L0.5 5.5" stroke="#d3dfee" stroke-width="1.3"/></svg>
<svg class="a" style="left:511px;top:95px" width="6" height="6" viewBox="0 0 6 6"><path d="M0.5 0.5 L5.5 5.5 M5.5 0.5 L0.5 5.5" stroke="#d3dfee" stroke-width="1.3"/></svg>
<svg class="a" style="left:621px;top:95px" width="6" height="6" viewBox="0 0 6 6"><path d="M0.5 0.5 L5.5 5.5 M5.5 0.5 L0.5 5.5" stroke="#d3dfee" stroke-width="1.3"/></svg>
<div class="a" style="left:313px;top:109px;width:414px;height:493px;background:#037c03"></div>
<div class="a" style="left:315px;top:111px;width:412px;height:29px;background:#fbfbfb"></div>
<div class="a" style="left:315px;top:140px;width:412px;height:462px;background:#828282"></div>
<div class="a" style="left:317px;top:112px;width:410px;height:490px;background:#fff"></div>
<div class="a" style="left:316px;top:112px;width:411px;height:28px;background:linear-gradient(180deg,#ebebeb 0,#f1f1f1 40%,#ffffff 80%,#ffffff 90%,#dcdcdc 100%)"></div>
<div class="a" style="left:315px;top:140px;width:412px;height:1px;background:#7e7e7e"></div>
<div class="a" style="left:317px;top:141px;width:410px;height:22px;background:#ebebeb"></div>
<div class="a" style="left:317px;top:163px;width:410px;height:1px;background:#8c8c8c"></div>
<div class="a" style="left:317px;top:142px;width:77px;height:21px;box-sizing:border-box;border:1px solid #a4a4a4;border-bottom:none;border-radius:3px 3px 0 0;background:linear-gradient(180deg,#f6f6f6 0,#f0f0f0 50%,#e3e3e3 52%,#e8e8e8 100%)"></div>
<div class="t" style="left:320.5px;top:148px;font-size:11px">Worksheet</div>
<div class="t" style="left:398px;top:149px;font-size:11px;letter-spacing:-0.3px">Query Builder</div>
<div class="a" style="left:378px;top:166px;width:349px;height:28px;background:#fff8e3"></div>
<div class="a" style="left:317px;top:164px;width:1px;height:438px;background:#a4a4a4"></div>
<div class="a" style="left:363px;top:164px;width:1px;height:438px;background:#858585"></div>
<div class="a" style="left:375px;top:164px;width:1px;height:438px;background-image:linear-gradient(180deg,#e8bec5 3px,transparent 3px);background-size:1px 6px"></div>
<div class="t" style="left:349px;top:170px;font-family:'Liberation Mono','DejaVu Sans Mono',monospace;font-size:20px;color:#333">1</div>
<div class="t big" style="top:265px">select one or more</div>
<div class="t big" style="top:299px">objects...drag to the</div>
<div class="t big" style="top:333px">db you want them</div>
<div class="t big" style="top:367px;word-spacing:-0.6px;letter-spacing:0.4px">to be copied to</div>
<svg width="0" height="0" style="position:absolute"><defs>
<linearGradient id="gdoc" x1="0" x2="1" y1="0" y2="1"><stop offset="0" stop-color="#ffffff"/><stop offset="1" stop-color="#c8c8ec"/></linearGradient>
<linearGradient id="gflop" x1="0" x2="0" y1="0" y2="1"><stop offset="0" stop-color="#8c8cd0"/><stop offset="1" stop-color="#4c4c9c"/></linearGradient>
<radialGradient id="ggreen" cx="0.4" cy="0.3" r="0.8"><stop offset="0" stop-color="#7cf07c"/><stop offset="0.5" stop-color="#18b018"/><stop offset="1" stop-color="#066006"/></radialGradient>
<radialGradient id="ggray" cx="0.4" cy="0.3" r="0.8"><stop offset="0" stop-color="#e0e0e0"/><stop offset="0.5" stop-color="#a0a0a0"/><stop offset="1" stop-color="#606060"/></radialGradient>
<radialGradient id="gcube" cx="0.4" cy="0.3" r="0.8"><stop offset="0" stop-color="#d8ffd0"/><stop offset="0.5" stop-color="#58d048"/><stop offset="1" stop-color="#1c8c1c"/></radialGradient>
<radialGradient id="glens" cx="0.4" cy="0.35" r="0.7"><stop offset="0" stop-color="#6cc4ff"/><stop offset="1" stop-color="#0c50c8"/></radialGradient>
<linearGradient id="gcylg" x1="0" x2="1" y1="0" y2="0"><stop offset="0" stop-color="#8c8c8c"/><stop offset="0.4" stop-color="#d4d4d4"/><stop offset="1" stop-color="#8c8c8c"/></linearGradient>
<linearGradient id="gcylb" x1="0" x2="1" y1="0" y2="0"><stop offset="0" stop-color="#5c5c9c"/><stop offset="0.4" stop-color="#f0f0fc"/><stop offset="1" stop-color="#6c6cac"/></linearGradient>
<filter id="noop" x="-10%" y="-10%" width="120%" height="120%"><feOffset dx="0" dy="0"/></filter>
<g id="sqlic"><path d="M2.2 2.2 L6.6 0.2 L11 2.2 L11 6.2 L6.6 8.2 L2.2 6.2 Z" fill="url(#gcube)" stroke="#22a422" stroke-width="0.8" stroke-linejoin="round"/><path d="M0.4 9 L2.2 8 L4 9 L4 14 L2.2 15.2 L0.4 14 Z" fill="url(#gcube)" stroke="#22a422" stroke-width="0.8" stroke-linejoin="round"/><path d="M10.4 6.4 L12.4 5.2 L14 6.4 L14 8.6 L10.4 8.6 Z" fill="url(#gcube)" stroke="#22a422" stroke-width="0.8" stroke-linejoin="round"/>
<rect x="3.7" y="8.5" width="11.8" height="6.8" fill="#fff" stroke="#646464" stroke-width="1"/>
<g filter="url(#noop)"><text x="4.7" y="14.1" font-family="'DejaVu Sans','Liberation Sans',sans-serif" font-weight="bold" font-size="6.4" fill="#04042c" textLength="10.2" lengthAdjust="spacingAndGlyphs">SQL</text></g></g>
<g id="star"><path d="M5 0 L6 1.8 L8.4 1.4 L8.2 3.8 L10 5 L8.2 6.2 L8.4 8.6 L6 8.2 L5 10 L4 8.2 L1.6 8.6 L1.8 6.2 L0 5 L1.8 3.8 L1.6 1.4 L4 1.8 Z" fill="#d41414" stroke="#9c0c0c" stroke-width="0.5"/><path d="M5 1.6 L5.7 3.6 L7.6 3 L6.6 5 L7.6 7 L5.7 6.4 L5 8.4 L4.3 6.4 L2.4 7 L3.4 5 L2.4 3 L4.3 3.6 Z" fill="#ffe430"/></g>
<g id="cylb"><path d="M0.4 2.8 C0.4 -0.4 11.6 -0.4 11.6 2.8 L11.6 10.4 C11.6 13.6 0.4 13.6 0.4 10.4 Z" fill="url(#gcylb)" stroke="#50508c" stroke-width="0.7"/><path d="M0.6 3 C1.4 5.4 10.6 5.4 11.4 3 M0.6 5.8 C1.4 8.2 10.6 8.2 11.4 5.8 M0.6 8.4 C1.4 10.8 10.6 10.8 11.4 8.4" fill="none" stroke="#5c5c9c" stroke-width="0.8"/></g>
<g id="cylg"><path d="M0.4 2.8 C0.4 -0.4 11.6 -0.4 11.6 2.8 L11.6 10.4 C11.6 13.6 0.4 13.6 0.4 10.4 Z" fill="url(#gcylg)" stroke="#8a8a8a" stroke-width="0.7"/><path d="M0.6 3 C1.4 5.4 10.6 5.4 11.4 3" fill="none" stroke="#8c8c8c" stroke-width="0.8"/></g>
</defs></svg>
<svg class="a" style="left:13px;top:53px;overflow:visible" width="16" height="16" viewBox="0 0 16 16"><path d="M0.8 0.8 L9 0.8 L12.6 4 L12.6 14 L0.8 14 Z" fill="url(#gdoc)" stroke="#50508c" stroke-width="1"/><path d="M1.4 14.8 L13.4 14.8 L13.4 5" fill="none" stroke="#44446c" stroke-width="0.9" opacity=".7"/><g transform="translate(6.2,-0.6) scale(0.95)"><use href="#star"/></g></svg>
<svg class="a" style="left:36px;top:54px;overflow:visible" width="16" height="13" viewBox="0 0 16 13"><path d="M0.6 2 Q0.6 0.8 1.8 0.8 L5 0.8 L6.4 2.4 L11.6 2.4 Q12.6 2.4 12.6 3.4 L12.6 5 L4 5 L0.6 10.6 Z" fill="#f4ec9c" stroke="#a89434" stroke-width="0.9"/><path d="M0.8 11.4 L4 5.4 L15.2 5.4 L12 11.4 Z" fill="#f0e488" stroke="#a89434" stroke-width="0.9" stroke-linejoin="round"/></svg>
<svg class="a" style="left:59px;top:53px;overflow:visible" width="14" height="14" viewBox="0 0 14 14"><path d="M0.6 1.6 Q0.6 0.6 1.6 0.6 L12.4 0.6 Q13.4 0.6 13.4 1.6 L13.4 12.4 Q13.4 13.4 12.4 13.4 L1.6 13.4 L0.6 12.4 Z" fill="#a8a8a8" stroke="#8c8c8c" stroke-width="0.8"/><rect x="3" y="0.8" width="8" height="5.2" fill="#9c9c9c"/><rect x="3.4" y="8.2" width="7.4" height="5" fill="#bcbcbc"/><rect x="4.6" y="9.2" width="1.8" height="3.2" fill="#8c8c8c"/></svg>
<svg class="a" style="left:82px;top:53px;overflow:visible" width="15" height="15" viewBox="0 0 15 15"><g transform="translate(3.6,0)"><path d="M0.6 1.6 Q0.6 0.6 1.6 0.6 L9.4 0.6 Q10.4 0.6 10.4 1.6 L10.4 9.4 Q10.4 10.4 9.4 10.4 L1.6 10.4 L0.6 9.4 Z" fill="url(#gflop)" stroke="#34347c" stroke-width="0.8"/><rect x="2.4" y="0.9" width="6" height="3.2" fill="#b4b4e4"/><rect x="2.6" y="6" width="6" height="4.2" fill="#fff"/><rect x="3.4" y="7" width="1.6" height="2.4" fill="#222"/></g><g transform="translate(0,3.4)"><path d="M0.6 1.6 Q0.6 0.6 1.6 0.6 L9.4 0.6 Q10.4 0.6 10.4 1.6 L10.4 9.4 Q10.4 10.4 9.4 10.4 L1.6 10.4 L0.6 9.4 Z" fill="url(#gflop)" stroke="#34347c" stroke-width="0.8"/><rect x="2.4" y="0.9" width="6" height="3.2" fill="#b4b4e4"/><rect x="2.6" y="6" width="6" height="4.2" fill="#fff"/><rect x="3.4" y="7" width="1.6" height="2.4" fill="#222"/></g></svg>
<svg class="a" style="left:119px;top:53px;overflow:visible" width="15" height="15" viewBox="0 0 15 15"><path d="M0 2.6 L0 9.4 L7 9.4 L7 8 Q7.4 5.4 9.8 5.6 Q11 6.2 10.4 9 Q9.6 12.2 8 14.8 Q12.6 10.6 14 6.4 Q15 1.6 11.6 0.4 Q7.6 -0.6 4.4 2.4 L3.4 3 Z" fill="#9a9a9a" stroke="#8e8e8e" stroke-width="0.5"/></svg>
<svg class="a" style="left:142.5px;top:53px;overflow:visible" width="15" height="15" viewBox="0 0 15 15"><g transform="translate(14.6,0) scale(-1,1)"><path d="M0 2.6 L0 9.4 L7 9.4 L7 8 Q7.4 5.4 9.8 5.6 Q11 6.2 10.4 9 Q9.6 12.2 8 14.8 Q12.6 10.6 14 6.4 Q15 1.6 11.6 0.4 Q7.6 -0.6 4.4 2.4 L3.4 3 Z" fill="#9a9a9a" stroke="#8e8e8e" stroke-width="0.5"/></g></svg>
<svg class="a" style="left:179px;top:53px;overflow:visible" width="15" height="15" viewBox="0 0 15 15"><circle cx="7.5" cy="7.5" r="7.2" fill="url(#ggreen)" stroke="#0a5c0a" stroke-width="0.6"/><path d="M2.6 7.5 L7.4 3.2 L7.4 5.8 L12 5.8 L12 9.2 L7.4 9.2 L7.4 11.8 Z" fill="#fff"/></svg>
<svg class="a" style="left:203px;top:59px;overflow:visible" width="7" height="4" viewBox="0 0 7 4"><path d="M0 0 L7 0 L3.5 4 Z" fill="#b9cde6"/></svg>
<svg class="a" style="left:218px;top:53px;overflow:visible" width="15" height="15" viewBox="0 0 15 15"><circle cx="7.5" cy="7.5" r="7.2" fill="url(#ggray)" stroke="#6c6c6c" stroke-width="0.6"/><path d="M12.4 7.5 L7.6 3.2 L7.6 5.8 L3 5.8 L3 9.2 L7.6 9.2 L7.6 11.8 Z" fill="#fff"/></svg>
<svg class="a" style="left:242.5px;top:59px;overflow:visible" width="7.5" height="4" viewBox="0 0 7.5 4"><path d="M0 0 L7.5 0 L3.75 4 Z" fill="#808080"/></svg>
<svg class="a" style="left:271px;top:53px;overflow:visible" width="16" height="16" viewBox="0 0 16 16"><use href="#sqlic"/></svg>
<svg class="a" style="left:295px;top:59px;overflow:visible" width="7.5" height="4" viewBox="0 0 7.5 4"><path d="M0 0 L7.5 0 L3.75 4 Z" fill="#b9cde6"/></svg>
<svg class="a" style="left:324px;top:54px;overflow:visible" width="16" height="13" viewBox="0 0 16 13"><path d="M3.4 0.6 L6.2 0.6 L7 2.4 L9 2.4 L9.8 0.6 L12.6 0.6 L15.4 8.4 L15.4 11 L9 11 L9 6.4 L7 6.4 L7 11 L0.6 11 L0.6 8.4 Z" fill="#4c4c50" stroke="#2c2c30" stroke-width="0.6"/><path d="M3.8 1.4 L5.6 1.4 L3 8 L1.6 8 Z" fill="#9c9ca0" opacity=".7"/><circle cx="3.9" cy="9.6" r="2.6" fill="url(#glens)" stroke="#1c2c5c" stroke-width="0.8"/><circle cx="12.1" cy="9.6" r="2.6" fill="url(#glens)" stroke="#1c2c5c" stroke-width="0.8"/></svg>
<svg class="a" style="left:27px;top:114px;overflow:visible" width="15" height="15" viewBox="0 0 15 15"><path d="M5.2 0.7 L9.8 0.7 L9.8 5.2 L14.3 5.2 L14.3 9.8 L9.8 9.8 L9.8 14.3 L5.2 14.3 L5.2 9.8 L0.7 9.8 L0.7 5.2 L5.2 5.2 Z" fill="#1cc81c" stroke="#0a6c0a" stroke-width="1" stroke-linejoin="round"/><path d="M6.2 1.8 L8.2 1.8 L8.2 6.4 L6.2 6.4 Z M1.8 6.2 L13 6.2 L13 7.4 L1.8 7.4 Z" fill="#8cf48c" opacity=".8"/></svg>
<svg class="a" style="left:51.5px;top:120px;overflow:visible" width="7" height="4" viewBox="0 0 7 4"><path d="M0 0 L7 0 L3.5 4 Z" fill="#4c70aa"/></svg>
<svg class="a" style="left:66px;top:114px;overflow:visible" width="16" height="15" viewBox="0 0 16 15"><g fill="none" stroke="#a2a2a2" stroke-width="3.2"><path d="M2.6 10.8 A5.6 5.8 0 0 1 8.6 2.6"/><path d="M13.4 4.2 A5.6 5.8 0 0 1 7.4 12.4"/></g><path d="M7.8 -0.4 L13.2 3.4 L8.2 6.6 Z" fill="#a2a2a2"/><path d="M8.2 15.4 L2.8 11.6 L7.8 8.4 Z" fill="#a2a2a2"/></svg>
<svg class="a" style="left:89px;top:115px;overflow:visible" width="14" height="14" viewBox="0 0 14 14"><path d="M0.4 0.6 L13.6 0.6 L8.6 7 L8.6 13.4 L5.4 13.4 L5.4 7 Z" fill="#a4a4a4"/></svg>
<svg class="a" style="left:111px;top:114px;overflow:visible" width="16" height="15" viewBox="0 0 16 15"><g><rect x="0.6" y="0.6" width="9" height="8.4" rx="1" fill="#8cbcf0" stroke="#2c64c0" stroke-width="1.1"/><rect x="1.2" y="1.2" width="7.8" height="2" fill="#3c78d4"/></g><g transform="translate(5.4,5.4)"><rect x="0.6" y="0.6" width="9" height="8.4" rx="1" fill="#8cbcf0" stroke="#2c64c0" stroke-width="1.1"/><rect x="1.2" y="1.2" width="7.8" height="2" fill="#3c78d4"/><rect x="2.2" y="5" width="5.6" height="1.6" fill="#1c50b0"/></g></svg>
<svg class="a" style="left:317px;top:90px;overflow:visible" width="16" height="16" viewBox="0 0 16 16"><use href="#sqlic"/></svg>
<svg class="a" style="left:373px;top:90px;overflow:visible" width="15" height="15" viewBox="0 0 15 15"><rect x="0.6" y="0.6" width="13.4" height="13.4" fill="#ececec" stroke="#3c3c3c" stroke-width="1"/><path d="M1 14.8 L14.8 14.8 L14.8 1.4" fill="none" stroke="#555" stroke-width="0.8"/><text x="2.4" y="6.4" font-family="'DejaVu Sans Mono','Liberation Mono',monospace" font-weight="bold" font-size="5.6" fill="#222" textLength="9.6" lengthAdjust="spacingAndGlyphs">SQL</text><path d="M2.6 8.4 L12 8.4 M2.6 10.4 L12 10.4 M2.6 12.4 L12 12.4" stroke="#333" stroke-width="0.9"/></svg>
<svg class="a" style="left:526px;top:90px;overflow:visible" width="13" height="16" viewBox="0 0 13 16"><rect x="4.6" y="0.6" width="6.4" height="13.4" rx="0.8" fill="url(#gdoc)" stroke="#1c1c5c" stroke-width="1.1"/><path d="M5 14.8 L11.8 14.8 L11.8 1.6" fill="none" stroke="#3c3c6c" stroke-width="0.8" opacity=".7"/><path d="M0.4 4.4 L4 4.4 M2.2 2.8 L4 4.4 L2.2 6 M4.4 10.2 L0.8 10.2 M2.4 8.6 L0.6 10.2 L2.4 11.8" fill="none" stroke="#111" stroke-width="1"/></svg>
<svg class="a" style="left:637px;top:90px;overflow:visible" width="13" height="16" viewBox="0 0 13 16"><rect x="4.6" y="0.6" width="6.4" height="13.4" rx="0.8" fill="url(#gdoc)" stroke="#1c1c5c" stroke-width="1.1"/><path d="M5 14.8 L11.8 14.8 L11.8 1.6" fill="none" stroke="#3c3c6c" stroke-width="0.8" opacity=".7"/><path d="M0.4 4.4 L4 4.4 M2.2 2.8 L4 4.4 L2.2 6 M4.4 10.2 L0.8 10.2 M2.4 8.6 L0.6 10.2 L2.4 11.8" fill="none" stroke="#111" stroke-width="1"/></svg>
<svg class="a" style="left:321px;top:118px;overflow:visible" width="15" height="13" viewBox="0 0 15 13"><path d="M0.4 0.2 L14.2 6.4 L0.4 12.8 Z" fill="#989898" stroke="#8a8a8a" stroke-width="0.6"/></svg>
<svg class="a" style="left:345px;top:117px;overflow:visible" width="14" height="15" viewBox="0 0 14 15"><rect x="0.4" y="0.4" width="12.2" height="14" fill="#a4a4a4" stroke="#8c8c8c" stroke-width="0.8"/><path d="M2.4 2.6 L10.6 2.6 M2.4 4.6 L10.6 4.6 M2.4 6.6 L10.6 6.6 M2.4 8.6 L10.6 8.6 M6 10.6 L10.6 10.6 M6 12.4 L10.6 12.4" stroke="#909090" stroke-width="0.8"/><path d="M2 9.4 L6 11.6 L2 13.8 Z" fill="#8a8a8a"/></svg>
<svg class="a" style="left:367px;top:117px;overflow:visible" width="16" height="15" viewBox="0 0 16 15"><g transform="translate(3.6,1.6)"><use href="#cylg"/></g><g fill="#e4e4e4" stroke="#7c7c7c" stroke-width="0.8"><rect x="0.4" y="0.4" width="4" height="3"/><rect x="5.4" y="4.6" width="4.4" height="3"/><rect x="5.4" y="9" width="4.4" height="3"/></g><path d="M2.4 3.4 L2.4 10.4 L5.4 10.4 M2.4 6 L5.4 6" fill="none" stroke="#7c7c7c" stroke-width="0.8"/></svg>
<svg class="a" style="left:391px;top:123px;overflow:visible" width="8" height="4.4" viewBox="0 0 8 4.4"><path d="M0 0 L8 0 L4 4.4 Z" fill="#555"/></svg>
<svg class="a" style="left:406px;top:117px;overflow:visible" width="16" height="15" viewBox="0 0 16 15"><g transform="translate(4,1.6)"><use href="#cylg"/></g><g transform="translate(1,0)"><g fill="#e4e4e4" stroke="#7c7c7c" stroke-width="0.8"><rect x="0.4" y="0.4" width="4" height="3"/><rect x="5.4" y="4.6" width="4.4" height="3"/><rect x="5.4" y="9" width="4.4" height="3"/></g><path d="M2.4 3.4 L2.4 10.4 L5.4 10.4 M2.4 6 L5.4 6" fill="none" stroke="#7c7c7c" stroke-width="0.8"/></g><path d="M0.2 8.6 L4.2 11.2 L0.2 14.4 Z" fill="#9c9c9c"/></svg>
<svg class="a" style="left:429px;top:117px;overflow:visible" width="16" height="15" viewBox="0 0 16 15"><g transform="translate(0.2,0.4)"><use href="#cylg"/></g><circle cx="10.4" cy="9.4" r="2.8" fill="#c8c8c8" stroke="#848484" stroke-width="1.2"/><path d="M12.4 11.6 L15 14.4" stroke="#848484" stroke-width="1.8"/></svg>
<div class="a" style="left:454px;top:120px;width:1px;height:10px;background:#a2a2a2"></div>
<div class="a" style="left:510px;top:120px;width:1px;height:10px;background:#a2a2a2"></div>
<div class="a" style="left:635px;top:120px;width:1px;height:10px;background:#a2a2a2"></div>
<svg class="a" style="left:462px;top:117px;overflow:visible" width="16" height="15" viewBox="0 0 16 15"><use href="#cylb"/><path d="M5.6 10.2 L7.8 8.4 L9.8 10.8 L13.8 6 L15.8 7.6 L10 15 Z" fill="#20cc20" stroke="#0a640a" stroke-width="0.9" stroke-linejoin="round"/></svg>
<svg class="a" style="left:485px;top:117px;overflow:visible" width="16" height="15" viewBox="0 0 16 15"><use href="#cylb"/><path d="M6.6 8 L6.8 13.2 L11.6 13 L10 11.6 Q12.4 10.2 13.4 12 Q14 13.6 12 15.4 Q16.4 14.4 15.8 11 Q15 7.6 10.8 8.6 Q9.2 9 8.4 9.8 Z" fill="#dc2424" stroke="#8c0c0c" stroke-width="0.7"/></svg>
<svg class="a" style="left:518.5px;top:116.5px;overflow:visible" width="16" height="16" viewBox="0 0 16 16"><use href="#sqlic"/><g transform="translate(6.6,-0.6) scale(0.9)"><use href="#star"/></g></svg>
<svg class="a" style="left:541px;top:117px;overflow:visible" width="16" height="15" viewBox="0 0 16 15"><g transform="rotate(-40 8 8)"><rect x="-1" y="5.4" width="18" height="5.4" rx="1.6" fill="#d4640a" stroke="#6c2c04" stroke-width="0.9"/><rect x="9.6" y="5.8" width="3.6" height="4.6" fill="#e4e4e4"/><rect x="13.2" y="5.8" width="3.4" height="4.6" rx="1" fill="#f09838"/><path d="M0 6.6 L9.4 6.6" stroke="#ffb870" stroke-width="1.2" opacity=".9"/></g></svg>
<svg class="a" style="left:564px;top:117px;overflow:visible" width="16" height="15" viewBox="0 0 16 15"><rect x="4.6" y="0.6" width="10.4" height="12.6" fill="#f4f4ff" stroke="#34348c" stroke-width="1"/><path d="M7 3 L13 3 M7 5 L13 5 M7 7 L13 7 M9 9 L13 9 M9 11 L13 11" stroke="#4444a4" stroke-width="1"/><circle cx="5.4" cy="9.8" r="4.7" fill="#d4ecfc" stroke="#1c64c8" stroke-width="1.3"/><path d="M5.4 6.8 L5.4 9.8 L7.8 9.8" fill="none" stroke="#c81c1c" stroke-width="1"/></svg>
<svg class="a" style="left:588px;top:116px;overflow:visible" width="15" height="17" viewBox="0 0 15 17"><text x="-0.4" y="9.6" font-family="'Liberation Serif','DejaVu Serif',serif" font-size="12.5" fill="#222" stroke="#222" stroke-width="0.25" textLength="14.6" lengthAdjust="spacingAndGlyphs">Aa</text><path d="M2.4 13.2 L6 10.2 L6 12.3 L11 12.3 L11 10.2 L14.6 13.2 L11 16.2 L11 14.1 L6 14.1 L6 16.2 Z" fill="#18a018" stroke="#0c6c0c" stroke-width="0.4"/></svg>
<svg class="a" style="left:610px;top:117px;overflow:visible" width="16" height="15" viewBox="0 0 16 15"><path d="M0.8 12.4 L7 6 Q6 3 8.2 1.4 Q10 0.2 12 1 L9.6 3.4 L10.2 5.4 L12.2 6 L14.4 3.6 Q15.2 6 13.6 7.8 Q12 9.4 9.6 8.6 L3.4 14.8 Q1.6 15 0.8 12.4 Z" fill="#a8a8a8"/><g fill="#b4b4b4" stroke="#9c9c9c" stroke-width="0.5"><rect x="11" y="7.6" width="3.6" height="2.4"/><rect x="11" y="10.6" width="3.6" height="2.4"/><rect x="11" y="13.2" width="3.6" height="1.8"/></g><path d="M9.6 8.8 L9.6 14.2 L11 14.2 M9.6 11.6 L11 11.6" fill="none" stroke="#a4a4a4" stroke-width="0.7"/></svg>
</body></html>
